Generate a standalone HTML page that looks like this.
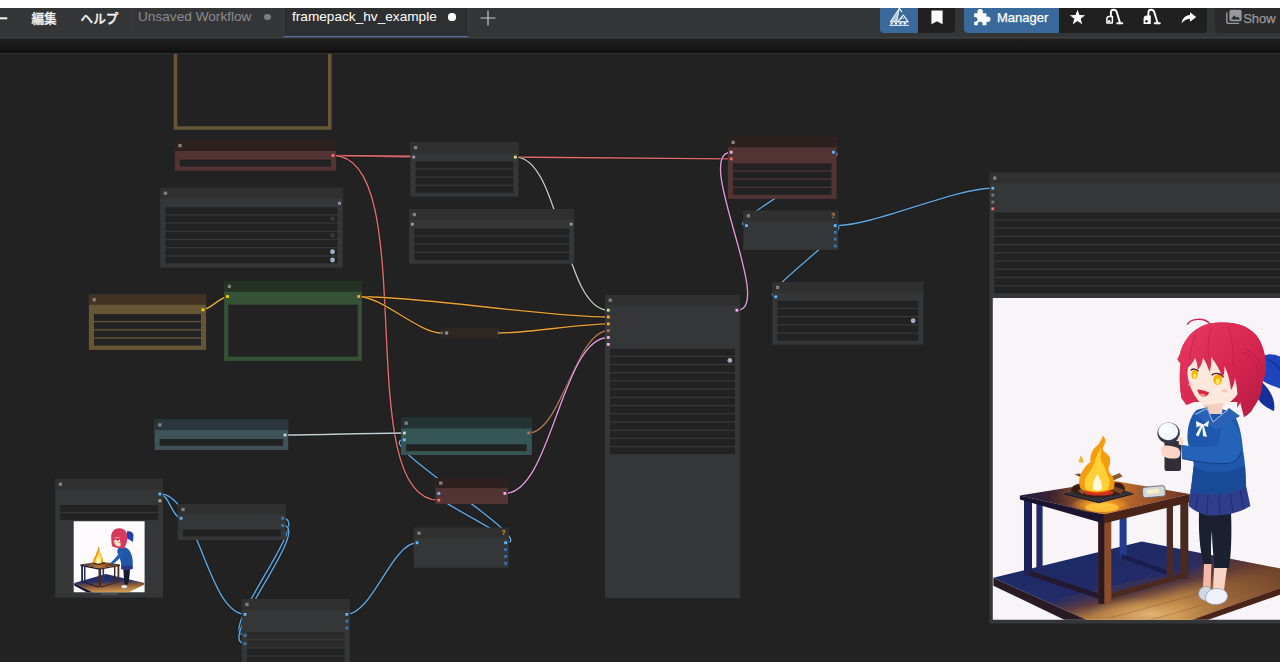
<!DOCTYPE html>
<html lang="ja"><head><meta charset="utf-8"><title>ComfyUI - framepack_hv_example</title>
<style>
html,body{margin:0;padding:0;background:#fff;}
body{width:1280px;height:670px;overflow:hidden;position:relative;font-family:"Liberation Sans","Noto Sans CJK JP",sans-serif;}
#graph{position:absolute;left:0;top:54px;width:1280px;height:607.6px;background:#222222;overflow:hidden;}
#graph svg{position:absolute;left:0;top:-54px;}
#bar{position:absolute;left:0;top:8px;width:1280px;height:30px;color:#f0f0f0;font-size:13px;}
#band{position:absolute;left:0;top:8px;width:1280px;height:46px;background:linear-gradient(to bottom,#343537 0,#343537 28.5px,#3f4042 29.1px,#3f4042 30.1px,#1f1f1f 30.9px,#191919 38px,#0f0f0f 44.4px,#2f2f2f 45.2px,#2c2c2c 46px);}
#bar .t{position:absolute;top:0;height:30px;line-height:18px;white-space:nowrap;}
.menu{font-weight:500;font-size:12.6px;top:2px !important;-webkit-text-stroke:0.35px #f0f0f0;}
.tab{position:absolute;top:0;height:29px;box-sizing:border-box;border-left:1px solid #3a3b3d;}
.tab.active{background:#2e2f31;border-bottom:1px solid #5474b2;}
.dot{position:absolute;border-radius:50%;}
.grp{position:absolute;top:0;height:24.5px;border-radius:0 0 4px 4px;overflow:hidden;background:#202021;}
.grp .blue{position:absolute;left:0;top:0;height:100%;background:#3a6a9c;}

.sb{-webkit-text-stroke:0.25px currentColor;}

</style></head><body>
<div id="band"></div>
<div id="bar">
 <span class="t menu" style="left:-4.5px">ー</span>
 <span class="t menu" style="left:31.4px">編集</span>
 <span class="t menu" style="left:80.6px">ヘルプ</span>
 <div class="tab" style="left:130px;width:154px"></div>
 <span class="t" style="left:138px;top:0;color:#8b8c91;font-size:13.65px">Unsaved Workflow</span>
 <span class="dot" style="left:264.3px;top:6px;width:6.4px;height:6.4px;background:#7b7c81"></span>
 <div class="tab active" style="left:283px;width:185.5px"></div>
 <span class="t" style="left:292px;top:0;color:#ffffff;font-size:13.65px">framepack_hv_example</span>
 <span class="dot" style="left:448.4px;top:5.4px;width:7.2px;height:7.2px;background:#ffffff"></span>
 <div style="position:absolute;left:468px;top:0;width:1px;height:29px;background:#3a3b3d"></div>
 <svg style="position:absolute;left:480px;top:2px" width="16" height="16" viewBox="0 0 16 16"><path d="M8 0.5V15.5M0.5 8H15.5" stroke="#c8c8c8" stroke-width="1.2" fill="none"/></svg>

 <div class="grp" style="left:879.5px;width:75px"><div class="blue" style="width:38.5px"></div></div>
 <div class="grp" style="left:963.5px;width:243.5px"><div class="blue" style="width:95px"></div></div>
 <div class="grp" style="left:1215px;width:80px;background:#2a2a2b"></div>
 <span class="t sb" style="left:997px;top:0.5px;color:#fff;font-size:13px">Manager</span>
 <span class="t sb" style="left:1243.2px;top:2px;color:#98999c;font-size:13px">Show</span>
 <svg style="position:absolute;left:0;top:0" width="1280" height="30" viewBox="0 8 1280 30">
  <!-- crane / triangle icon -->
  <path d="M899.3,8.2 L890.2,21.9 L896.6,21.9 Z" fill="#fff" fill-opacity="0.6" stroke="#fff" stroke-width="0.9" stroke-linejoin="round"/>
  <g stroke="#fff" fill="none" stroke-width="1.1" stroke-linejoin="round" stroke-linecap="round">
   <path d="M899.3,8.4 L901.7,11.6"/>
   <path d="M897.6,21.9 L903.3,15 L908.2,21.9 Z"/>
   <path d="M900.6,19.2 C901.2,17.6 902.8,17.2 903.6,18.4" stroke-width="0.9"/>
   <path d="M889.6,25.4 L908.6,25.4" stroke-width="0.9"/>
   <path d="M890.6,23.5 L908.2,23.5" stroke-width="1.9" stroke-dasharray="2.1 2.3" stroke-linecap="butt"/>
  </g>
  <!-- bookmark -->
  <path d="M931.4,10.4 H942.6 V24.2 L937,21.3 L931.4,24.2 Z" fill="#fff"/>
  <!-- puzzle -->
  <path fill="#fff" d="M974.2,13.2 h3.6 c-0.9,-1.9 0.2,-4.1 2.4,-4.1 c2.2,0 3.3,2.2 2.4,4.1 h3.8 v3.7 c1.9,-0.9 4.1,0.2 4.1,2.4 c0,2.2 -2.2,3.3 -4.1,2.4 v3.6 h-4 c0.9,-1.9 -0.2,-3.6 -2.2,-3.6 c-2,0 -3.1,1.7 -2.2,3.6 h-3.8 v-3.9 c1.7,0.8 3.3,-0.3 3.3,-2.1 c0,-1.8 -1.6,-2.9 -3.3,-2.1 Z"/>
  <!-- star -->
  <polygon fill="#fff" points="1077.50,9.70 1079.44,15.03 1085.11,15.23 1080.64,18.72 1082.20,24.17 1077.50,21.00 1072.80,24.17 1074.36,18.72 1069.89,15.23 1075.56,15.03"/>
  <!-- vacuum outline -->
  <g stroke="#fff" fill="none" stroke-width="1.9" stroke-linecap="round" stroke-linejoin="round">
   <path d="M1110.9,15.4 V12.6 C1110.9,8.9 1115.8,8.8 1116.8,12.2 L1120,22.8 M1117.2,23.3 H1122.3"/>
   <path d="M1106.9,23 V18.8 C1106.9,17.2 1107.9,16.4 1109.2,16.4 H1112.4 V23 Z" stroke-width="1.5"/>
  </g>
  <circle cx="1109.2" cy="21.3" r="1.25" fill="#fff"/>
  <!-- vacuum solid -->
  <g stroke="#fff" fill="none" stroke-width="1.9" stroke-linecap="round" stroke-linejoin="round">
   <path d="M1148.4,15.4 V12.6 C1148.4,8.9 1153.3,8.8 1154.3,12.2 L1157.5,22.8 M1154.7,23.3 H1159.8"/>
  </g>
  <path d="M1143.6,23.9 V18.6 C1143.6,16.6 1144.9,15.6 1146.6,15.6 H1150.8 V23.9 Z" fill="#fff"/>
  <circle cx="1146.4" cy="21.3" r="1.3" fill="#202021"/>
  <!-- share arrow -->
  <path fill="#fff" d="M1190,12.2 L1196.2,17 L1190,21.8 V19 C1186.4,18.8 1183.8,20.4 1181.6,23.4 C1182.2,18.6 1185.2,15.4 1190,15 Z"/>
  <!-- images icon -->
  <g fill="none" stroke="#98999c" stroke-width="1.4" stroke-linejoin="round">
   <path d="M1226.8,12.6 V21.4 C1226.8,22.6 1227.6,23.4 1228.8,23.4 H1239"/>
  </g>
  <rect x="1229.4" y="9.8" width="12.2" height="11.4" rx="1.6" fill="#98999c"/>
  <path d="M1231,19.4 L1234.2,15.2 L1236.4,17.8 L1237.8,16.4 L1240.2,19.4 Z" fill="#2a2a2b"/>
 </svg>

</div>


<div id="graph">
<svg width="1280" height="670" viewBox="0 0 1280 670">
<path d="M332.9,155.5 C353.1,155.5 393.4,157.1 413.6,157.1" stroke="#141414" stroke-opacity="0.55" stroke-width="2.9" fill="none"/>
<path d="M332.9,155.5 C353.1,155.5 393.4,157.1 413.6,157.1" stroke="#e06c6c" stroke-width="1.4" fill="none"/>
<path d="M332.9,155.5 C432.5,155.5 631.7,158.9 731.3,158.9" stroke="#141414" stroke-opacity="0.55" stroke-width="2.9" fill="none"/>
<path d="M332.9,155.5 C432.5,155.5 631.7,158.9 731.3,158.9" stroke="#e06c6c" stroke-width="1.4" fill="none"/>
<path d="M332.9,155.5 C423.1,155.5 348.8,500.2 439.0,500.2" stroke="#141414" stroke-opacity="0.55" stroke-width="2.9" fill="none"/>
<path d="M332.9,155.5 C423.1,155.5 348.8,500.2 439.0,500.2" stroke="#e06c6c" stroke-width="1.4" fill="none"/>
<path d="M515.6,157.1 C560.3,157.1 563.6,310.2 608.3,310.2" stroke="#141414" stroke-opacity="0.55" stroke-width="2.9" fill="none"/>
<path d="M515.6,157.1 C560.3,157.1 563.6,310.2 608.3,310.2" stroke="#c0c8c0" stroke-width="1.4" fill="none"/>
<path d="M736.8,310.2 C776.3,310.2 691.8,152.2 731.3,152.2" stroke="#141414" stroke-opacity="0.55" stroke-width="2.9" fill="none"/>
<path d="M736.8,310.2 C776.3,310.2 691.8,152.2 731.3,152.2" stroke="#de96da" stroke-width="1.4" fill="none"/>
<path d="M833.3,152.2 C861.7,152.2 718.1,225.6 746.5,225.6" stroke="#141414" stroke-opacity="0.55" stroke-width="2.9" fill="none"/>
<path d="M833.3,152.2 C861.7,152.2 718.1,225.6 746.5,225.6" stroke="#5fa6e0" stroke-width="1.4" fill="none"/>
<path d="M835.4,225.6 C875.9,225.6 952.5,188.3 993.0,188.3" stroke="#141414" stroke-opacity="0.55" stroke-width="2.9" fill="none"/>
<path d="M835.4,225.6 C875.9,225.6 952.5,188.3 993.0,188.3" stroke="#5fa6e0" stroke-width="1.4" fill="none"/>
<path d="M835.4,225.6 C858.6,225.6 752.5,296.8 775.7,296.8" stroke="#141414" stroke-opacity="0.55" stroke-width="2.9" fill="none"/>
<path d="M835.4,225.6 C858.6,225.6 752.5,296.8 775.7,296.8" stroke="#5fa6e0" stroke-width="1.4" fill="none"/>
<path d="M202.8,309.8 C209.9,309.8 220.8,296.5 227.9,296.5" stroke="#141414" stroke-opacity="0.55" stroke-width="2.9" fill="none"/>
<path d="M202.8,309.8 C209.9,309.8 220.8,296.5 227.9,296.5" stroke="#e4ae30" stroke-width="1.4" fill="none"/>
<path d="M358.7,296.5 C421.3,296.5 545.7,317.0 608.3,317.0" stroke="#141414" stroke-opacity="0.55" stroke-width="2.9" fill="none"/>
<path d="M358.7,296.5 C421.3,296.5 545.7,317.0 608.3,317.0" stroke="#eba033" stroke-width="1.4" fill="none"/>
<path d="M358.7,296.5 C381.3,296.5 418.9,333.0 441.5,333.0" stroke="#141414" stroke-opacity="0.55" stroke-width="2.9" fill="none"/>
<path d="M358.7,296.5 C381.3,296.5 418.9,333.0 441.5,333.0" stroke="#eba033" stroke-width="1.4" fill="none"/>
<path d="M498.8,333.0 C526.3,333.0 580.8,323.9 608.3,323.9" stroke="#141414" stroke-opacity="0.55" stroke-width="2.9" fill="none"/>
<path d="M498.8,333.0 C526.3,333.0 580.8,323.9 608.3,323.9" stroke="#eba033" stroke-width="1.4" fill="none"/>
<path d="M285.0,435.0 C314.8,435.0 374.4,433.0 404.2,433.0" stroke="#141414" stroke-opacity="0.55" stroke-width="2.9" fill="none"/>
<path d="M285.0,435.0 C314.8,435.0 374.4,433.0 404.2,433.0" stroke="#c4d0d6" stroke-width="1.4" fill="none"/>
<path d="M528.5,433.0 C560.9,433.0 575.9,330.7 608.3,330.7" stroke="#141414" stroke-opacity="0.55" stroke-width="2.9" fill="none"/>
<path d="M528.5,433.0 C560.9,433.0 575.9,330.7 608.3,330.7" stroke="#a87250" stroke-width="1.4" fill="none"/>
<path d="M504.7,493.4 C551.5,493.4 561.5,337.5 608.3,337.5" stroke="#141414" stroke-opacity="0.55" stroke-width="2.9" fill="none"/>
<path d="M504.7,493.4 C551.5,493.4 561.5,337.5 608.3,337.5" stroke="#de96da" stroke-width="1.4" fill="none"/>
<path d="M505.8,542.8 C541.9,542.8 368.0,439.8 404.2,439.8" stroke="#141414" stroke-opacity="0.55" stroke-width="2.9" fill="none"/>
<path d="M505.8,542.8 C541.9,542.8 368.0,439.8 404.2,439.8" stroke="#5fa6e0" stroke-width="1.4" fill="none"/>
<path d="M505.8,542.8 C526.5,542.8 418.2,493.4 439.0,493.4" stroke="#141414" stroke-opacity="0.55" stroke-width="2.9" fill="none"/>
<path d="M505.8,542.8 C526.5,542.8 418.2,493.4 439.0,493.4" stroke="#5fa6e0" stroke-width="1.4" fill="none"/>
<path d="M160.2,493.9 C168.2,493.9 173.0,518.2 181.0,518.2" stroke="#141414" stroke-opacity="0.55" stroke-width="2.9" fill="none"/>
<path d="M160.2,493.9 C168.2,493.9 173.0,518.2 181.0,518.2" stroke="#5fa6e0" stroke-width="1.4" fill="none"/>
<path d="M160.2,493.9 C197.0,493.9 208.2,614.2 245.0,614.2" stroke="#141414" stroke-opacity="0.55" stroke-width="2.9" fill="none"/>
<path d="M160.2,493.9 C197.0,493.9 208.2,614.2 245.0,614.2" stroke="#5fa6e0" stroke-width="1.4" fill="none"/>
<path d="M282.8,518.2 C313.5,518.2 214.3,635.2 245.0,635.2" stroke="#141414" stroke-opacity="0.55" stroke-width="2.9" fill="none"/>
<path d="M282.8,518.2 C313.5,518.2 214.3,635.2 245.0,635.2" stroke="#5fa6e0" stroke-width="1.4" fill="none"/>
<path d="M282.8,525.5 C313.7,525.5 214.0,643.5 245.0,643.5" stroke="#141414" stroke-opacity="0.55" stroke-width="2.9" fill="none"/>
<path d="M282.8,525.5 C313.7,525.5 214.0,643.5 245.0,643.5" stroke="#5fa6e0" stroke-width="1.4" fill="none"/>
<path d="M346.8,614.2 C371.9,614.2 392.1,542.8 417.2,542.8" stroke="#141414" stroke-opacity="0.55" stroke-width="2.9" fill="none"/>
<path d="M346.8,614.2 C371.9,614.2 392.1,542.8 417.2,542.8" stroke="#5fa6e0" stroke-width="1.4" fill="none"/>
<rect x="173.70" y="40.00" width="157.90" height="89.80" fill="#665636"/>
<rect x="177.30" y="40.00" width="150.70" height="86.20" fill="#222222"/>
<g>
<rect x="174.70" y="140.20" width="161.40" height="30.50" fill="#523434"/>
<rect x="174.70" y="140.20" width="161.40" height="10.80" fill="#2f2020"/>
<rect x="178.30" y="144.00" width="3.30" height="3.30" fill="#808080"/>
<rect x="179.80" y="159.70" width="151.20" height="6.84" fill="#222222"/>
<rect x="331.60" y="154.10" width="2.80" height="2.80" fill="#ff6e6e"/>
</g>
<g>
<rect x="160.20" y="187.80" width="182.40" height="79.90" fill="#353637"/>
<rect x="160.20" y="187.80" width="182.40" height="10.80" fill="#303030"/>
<rect x="163.80" y="191.60" width="3.30" height="3.30" fill="#808080"/>
<rect x="165.30" y="207.30" width="172.20" height="6.84" fill="#222222"/>
<rect x="165.30" y="215.51" width="172.20" height="6.84" fill="#222222"/>
<rect x="165.30" y="223.72" width="172.20" height="6.84" fill="#222222"/>
<rect x="165.30" y="231.93" width="172.20" height="6.84" fill="#222222"/>
<rect x="165.30" y="240.14" width="172.20" height="6.84" fill="#222222"/>
<rect x="165.30" y="248.35" width="172.20" height="6.84" fill="#222222"/>
<rect x="165.30" y="256.56" width="172.20" height="6.84" fill="#222222"/>
<circle cx="332.50" cy="218.93" r="2.4" fill="#3a3a3a"/>
<circle cx="332.50" cy="235.35" r="2.4" fill="#3a3a3a"/>
<circle cx="332.50" cy="251.77" r="2.4" fill="#9fb0c4"/>
<circle cx="332.50" cy="259.98" r="2.4" fill="#9fb0c4"/>
<rect x="338.10" y="201.90" width="2.80" height="2.80" fill="#9a9ab0"/>
</g>
<g>
<rect x="410.40" y="142.10" width="108.00" height="54.60" fill="#353637"/>
<rect x="410.40" y="142.10" width="108.00" height="10.90" fill="#303030"/>
<rect x="414.00" y="145.95" width="3.30" height="3.30" fill="#808080"/>
<rect x="415.50" y="161.40" width="97.80" height="6.84" fill="#222222"/>
<rect x="415.50" y="169.61" width="97.80" height="6.84" fill="#222222"/>
<rect x="415.50" y="177.82" width="97.80" height="6.84" fill="#222222"/>
<rect x="415.50" y="186.03" width="97.80" height="6.84" fill="#222222"/>
<rect x="412.30" y="155.70" width="2.80" height="2.80" fill="#9a9ab0"/>
<rect x="513.90" y="155.70" width="2.80" height="2.80" fill="#e0e080"/>
</g>
<g>
<rect x="409.10" y="209.20" width="165.10" height="54.60" fill="#353637"/>
<rect x="409.10" y="209.20" width="165.10" height="10.60" fill="#303030"/>
<rect x="412.70" y="212.90" width="3.30" height="3.30" fill="#808080"/>
<rect x="414.20" y="228.50" width="154.90" height="6.84" fill="#222222"/>
<rect x="414.20" y="236.71" width="154.90" height="6.84" fill="#222222"/>
<rect x="414.20" y="244.92" width="154.90" height="6.84" fill="#222222"/>
<rect x="414.20" y="253.13" width="154.90" height="6.84" fill="#222222"/>
<rect x="411.00" y="222.80" width="2.80" height="2.80" fill="#9a9ab0"/>
<rect x="569.70" y="222.80" width="2.80" height="2.80" fill="#9a9ab0"/>
</g>
<g>
<rect x="727.90" y="137.20" width="108.70" height="61.60" fill="#523434"/>
<rect x="727.90" y="137.20" width="108.70" height="10.20" fill="#2f2020"/>
<rect x="731.50" y="140.70" width="3.30" height="3.30" fill="#808080"/>
<rect x="733.00" y="163.40" width="98.50" height="6.84" fill="#222222"/>
<rect x="733.00" y="171.61" width="98.50" height="6.84" fill="#222222"/>
<rect x="733.00" y="179.82" width="98.50" height="6.84" fill="#222222"/>
<rect x="733.00" y="188.03" width="98.50" height="6.84" fill="#222222"/>
<rect x="729.80" y="150.80" width="2.80" height="2.80" fill="#f6b0f2"/>
<rect x="729.80" y="157.50" width="2.80" height="2.80" fill="#ff6e6e"/>
<rect x="832.10" y="150.80" width="2.80" height="2.80" fill="#64b5f6"/>
</g>
<g>
<rect x="743.20" y="210.70" width="95.10" height="39.20" fill="#353637"/>
<rect x="743.20" y="210.70" width="95.10" height="10.10" fill="#303030"/>
<rect x="746.80" y="214.15" width="3.30" height="3.30" fill="#808080"/>
<text x="833.10" y="218.05" font-size="6.5" font-weight="bold" fill="#e8a030" text-anchor="middle" font-family="Liberation Sans, sans-serif">?</text>
<rect x="745.10" y="224.20" width="2.80" height="2.80" fill="#64b5f6"/>
<rect x="833.80" y="224.20" width="2.80" height="2.80" fill="#64b5f6"/>
<rect x="833.80" y="231.00" width="2.80" height="2.80" fill="#3a78b8"/>
<rect x="833.80" y="237.80" width="2.80" height="2.80" fill="#3a78b8"/>
<rect x="833.80" y="244.60" width="2.80" height="2.80" fill="#3a78b8"/>
</g>
<g>
<rect x="772.40" y="282.00" width="150.90" height="62.70" fill="#353637"/>
<rect x="772.40" y="282.00" width="150.90" height="10.70" fill="#303030"/>
<rect x="776.00" y="285.75" width="3.30" height="3.30" fill="#808080"/>
<rect x="777.50" y="300.90" width="140.70" height="6.84" fill="#222222"/>
<rect x="777.50" y="309.11" width="140.70" height="6.84" fill="#222222"/>
<rect x="777.50" y="317.32" width="140.70" height="6.84" fill="#222222"/>
<rect x="777.50" y="325.53" width="140.70" height="6.84" fill="#222222"/>
<rect x="777.50" y="333.74" width="140.70" height="6.84" fill="#222222"/>
<circle cx="913.20" cy="320.74" r="2.4" fill="#9fb0c4"/>
<rect x="774.30" y="295.40" width="2.80" height="2.80" fill="#64b5f6"/>
</g>
<g>
<rect x="605.00" y="294.90" width="135.00" height="303.10" fill="#353637"/>
<rect x="605.00" y="294.90" width="135.00" height="10.60" fill="#303030"/>
<rect x="608.60" y="298.60" width="3.30" height="3.30" fill="#808080"/>
<rect x="610.10" y="348.80" width="124.80" height="6.84" fill="#222222"/>
<rect x="610.10" y="357.01" width="124.80" height="6.84" fill="#222222"/>
<rect x="610.10" y="365.22" width="124.80" height="6.84" fill="#222222"/>
<rect x="610.10" y="373.43" width="124.80" height="6.84" fill="#222222"/>
<rect x="610.10" y="381.64" width="124.80" height="6.84" fill="#222222"/>
<rect x="610.10" y="389.85" width="124.80" height="6.84" fill="#222222"/>
<rect x="610.10" y="398.06" width="124.80" height="6.84" fill="#222222"/>
<rect x="610.10" y="406.27" width="124.80" height="6.84" fill="#222222"/>
<rect x="610.10" y="414.48" width="124.80" height="6.84" fill="#222222"/>
<rect x="610.10" y="422.69" width="124.80" height="6.84" fill="#222222"/>
<rect x="610.10" y="430.90" width="124.80" height="6.84" fill="#222222"/>
<rect x="610.10" y="439.11" width="124.80" height="6.84" fill="#222222"/>
<rect x="610.10" y="447.32" width="124.80" height="6.84" fill="#222222"/>
<circle cx="729.90" cy="360.43" r="2.4" fill="#9fb0c4"/>
<rect x="606.90" y="308.80" width="2.80" height="2.80" fill="#d0e0a0"/>
<rect x="606.90" y="315.60" width="2.80" height="2.80" fill="#ffa931"/>
<rect x="606.90" y="322.50" width="2.80" height="2.80" fill="#ffa931"/>
<rect x="606.90" y="329.30" width="2.80" height="2.80" fill="#ad7452"/>
<rect x="606.90" y="336.10" width="2.80" height="2.80" fill="#f6b0f2"/>
<rect x="606.90" y="343.00" width="2.80" height="2.80" fill="#f6b0f2"/>
<rect x="735.50" y="308.80" width="2.80" height="2.80" fill="#f6b0f2"/>
</g>
<g>
<rect x="88.90" y="294.60" width="117.20" height="55.30" fill="#665636"/>
<rect x="88.90" y="294.60" width="117.20" height="10.10" fill="#423222"/>
<rect x="92.50" y="298.05" width="3.30" height="3.30" fill="#808080"/>
<rect x="94.00" y="314.10" width="107.00" height="6.84" fill="#222222"/>
<rect x="94.00" y="322.31" width="107.00" height="6.84" fill="#222222"/>
<rect x="94.00" y="330.52" width="107.00" height="6.84" fill="#222222"/>
<rect x="94.00" y="338.73" width="107.00" height="6.84" fill="#222222"/>
<rect x="201.60" y="308.40" width="2.80" height="2.80" fill="#ffd500"/>
</g>
<g>
<rect x="224.10" y="281.00" width="137.80" height="79.90" fill="#365236"/>
<rect x="224.10" y="281.00" width="137.80" height="10.80" fill="#243224"/>
<rect x="227.70" y="284.80" width="3.30" height="3.30" fill="#808080"/>
<rect x="228.30" y="304.70" width="129.40" height="52.00" fill="#222222"/>
<rect x="226.00" y="295.10" width="2.80" height="2.80" fill="#ffd500"/>
<rect x="357.40" y="295.10" width="2.80" height="2.80" fill="#ffa931"/>
</g>
<rect x="440.60" y="327.50" width="58.40" height="11.10" fill="#2e2623"/>
<rect x="445.00" y="331.40" width="3.20" height="3.20" fill="#8a8a8a"/>
<rect x="440.30" y="331.60" width="2.60" height="2.60" fill="#667066"/>
<rect x="497.60" y="331.60" width="2.60" height="2.60" fill="#667066"/>
<g>
<rect x="154.60" y="419.70" width="133.60" height="30.30" fill="#3f5159"/>
<rect x="154.60" y="419.70" width="133.60" height="10.30" fill="#2a363b"/>
<rect x="158.20" y="423.25" width="3.30" height="3.30" fill="#808080"/>
<rect x="159.70" y="439.00" width="123.40" height="6.84" fill="#222222"/>
<rect x="283.70" y="433.60" width="2.80" height="2.80" fill="#c8d8e0"/>
</g>
<g>
<rect x="401.00" y="417.80" width="130.80" height="37.20" fill="#365555"/>
<rect x="401.00" y="417.80" width="130.80" height="10.60" fill="#233333"/>
<rect x="404.60" y="421.50" width="3.30" height="3.30" fill="#808080"/>
<rect x="406.10" y="444.30" width="120.60" height="6.84" fill="#222222"/>
<rect x="402.90" y="431.60" width="2.80" height="2.80" fill="#c8d8e0"/>
<circle cx="404.30" cy="439.80" r="1.7" fill="#64b5f6"/>
<rect x="527.30" y="431.60" width="2.80" height="2.80" fill="#ad7452"/>
</g>
<g>
<rect x="435.50" y="478.10" width="72.50" height="25.90" fill="#523434"/>
<rect x="435.50" y="478.10" width="72.50" height="10.00" fill="#2f2020"/>
<rect x="439.10" y="481.50" width="3.30" height="3.30" fill="#808080"/>
<circle cx="438.80" cy="493.40" r="1.7" fill="#64b5f6"/>
<rect x="437.40" y="498.80" width="2.80" height="2.80" fill="#ff6e6e"/>
<rect x="503.50" y="492.00" width="2.80" height="2.80" fill="#f6b0f2"/>
</g>
<g>
<rect x="413.75" y="527.75" width="95.00" height="40.00" fill="#353637"/>
<rect x="413.75" y="527.75" width="95.00" height="10.75" fill="#303030"/>
<rect x="417.35" y="531.52" width="3.30" height="3.30" fill="#808080"/>
<text x="503.55" y="535.42" font-size="6.5" font-weight="bold" fill="#e8a030" text-anchor="middle" font-family="Liberation Sans, sans-serif">?</text>
<rect x="415.65" y="541.35" width="2.80" height="2.80" fill="#64b5f6"/>
<rect x="504.25" y="541.35" width="2.80" height="2.80" fill="#64b5f6"/>
<rect x="504.25" y="548.20" width="2.80" height="2.80" fill="#3a78b8"/>
<rect x="504.25" y="555.00" width="2.80" height="2.80" fill="#3a78b8"/>
<rect x="504.25" y="561.90" width="2.80" height="2.80" fill="#3a78b8"/>
</g>
<g>
<rect x="55.20" y="478.80" width="107.80" height="118.80" fill="#353637"/>
<rect x="55.20" y="478.80" width="107.80" height="10.80" fill="#303030"/>
<rect x="58.80" y="482.60" width="3.30" height="3.30" fill="#808080"/>
<rect x="60.30" y="505.00" width="97.90" height="6.84" fill="#222222"/>
<rect x="60.30" y="513.21" width="97.90" height="6.84" fill="#222222"/>
<rect x="158.50" y="492.60" width="2.80" height="2.80" fill="#64b5f6"/>
<rect x="158.50" y="499.40" width="2.80" height="2.80" fill="#b4b478"/>
</g>
<g>
<rect x="177.75" y="504.20" width="108.00" height="35.80" fill="#353637"/>
<rect x="177.75" y="504.20" width="108.00" height="10.30" fill="#303030"/>
<rect x="181.35" y="507.75" width="3.30" height="3.30" fill="#808080"/>
<rect x="182.85" y="529.50" width="97.80" height="6.84" fill="#222222"/>
<rect x="179.65" y="516.85" width="2.80" height="2.80" fill="#64b5f6"/>
<rect x="281.25" y="516.85" width="2.80" height="2.80" fill="#3a78b8"/>
<rect x="281.25" y="524.10" width="2.80" height="2.80" fill="#3a78b8"/>
</g>
<g>
<rect x="241.70" y="598.90" width="108.20" height="71.10" fill="#353637"/>
<rect x="241.70" y="598.90" width="108.20" height="10.90" fill="#303030"/>
<rect x="245.30" y="602.75" width="3.30" height="3.30" fill="#808080"/>
<rect x="247.10" y="632.10" width="97.50" height="6.84" fill="#2b2b2c"/>
<rect x="247.10" y="640.31" width="97.50" height="6.84" fill="#2b2b2c"/>
<rect x="247.10" y="648.52" width="97.50" height="6.84" fill="#222222"/>
<rect x="247.10" y="656.73" width="97.50" height="6.84" fill="#222222"/>
<rect x="243.60" y="613.00" width="2.80" height="2.80" fill="#64b5f6"/>
<rect x="243.60" y="634.10" width="2.80" height="2.80" fill="#3a78b8"/>
<rect x="243.60" y="642.40" width="2.80" height="2.80" fill="#3a78b8"/>
<rect x="345.40" y="613.00" width="2.80" height="2.80" fill="#64b5f6"/>
<rect x="345.40" y="619.80" width="2.80" height="2.80" fill="#3a78b8"/>
<rect x="345.40" y="626.60" width="2.80" height="2.80" fill="#3a78b8"/>
</g>
<g>
<rect x="989.50" y="172.50" width="310.50" height="451.00" fill="#353637"/>
<rect x="989.50" y="172.50" width="310.50" height="11.00" fill="#303030"/>
<rect x="993.10" y="176.40" width="3.30" height="3.30" fill="#808080"/>
<rect x="994.25" y="212.50" width="305.75" height="6.84" fill="#222222"/>
<rect x="994.25" y="220.71" width="305.75" height="6.84" fill="#222222"/>
<rect x="994.25" y="228.92" width="305.75" height="6.84" fill="#222222"/>
<rect x="994.25" y="237.13" width="305.75" height="6.84" fill="#222222"/>
<rect x="994.25" y="245.34" width="305.75" height="6.84" fill="#222222"/>
<rect x="994.25" y="253.55" width="305.75" height="6.84" fill="#222222"/>
<rect x="994.25" y="261.76" width="305.75" height="6.84" fill="#222222"/>
<rect x="994.25" y="269.97" width="305.75" height="6.84" fill="#222222"/>
<rect x="994.25" y="278.18" width="305.75" height="6.84" fill="#222222"/>
<rect x="994.25" y="286.39" width="305.75" height="6.84" fill="#222222"/>
<rect x="991.40" y="186.90" width="2.80" height="2.80" fill="#64b5f6"/>
<rect x="991.40" y="193.70" width="2.80" height="2.80" fill="#777788"/>
<rect x="991.40" y="200.60" width="2.80" height="2.80" fill="#777788"/>
<rect x="991.40" y="207.40" width="2.80" height="2.80" fill="#ff6e6e"/>
</g>
<defs>
 <clipPath id="imgclip"><rect x="992.8" y="298" width="300" height="321.8"/></clipPath>
 <linearGradient id="floorg" gradientUnits="userSpaceOnUse" x1="1122" y1="548" x2="1140" y2="622">
  <stop offset="0" stop-color="#1c2a66"/><stop offset="0.45" stop-color="#232c68"/><stop offset="0.62" stop-color="#5a3c40"/><stop offset="0.78" stop-color="#b07a42"/><stop offset="1" stop-color="#cf9852"/>
 </linearGradient>
 <linearGradient id="topg" x1="0" y1="0" x2="1" y2="0">
  <stop offset="0" stop-color="#1c1c40"/><stop offset="0.18" stop-color="#3a2230"/><stop offset="0.4" stop-color="#a05a2a"/><stop offset="0.52" stop-color="#d88424"/><stop offset="0.66" stop-color="#b0622a"/><stop offset="0.85" stop-color="#8a4828"/><stop offset="1" stop-color="#6a3424"/>
 </linearGradient>
 <radialGradient id="glow" cx="0.5" cy="0.5" r="0.5">
  <stop offset="0" stop-color="#ffd060" stop-opacity="0.95"/><stop offset="0.6" stop-color="#f39a20" stop-opacity="0.7"/><stop offset="1" stop-color="#f39a20" stop-opacity="0"/>
 </radialGradient>
 <linearGradient id="hairg" x1="0" y1="0" x2="1" y2="1">
  <stop offset="0" stop-color="#e83a62"/><stop offset="0.6" stop-color="#d4244e"/><stop offset="1" stop-color="#b01a40"/>
 </linearGradient>
 <linearGradient id="legbrown" x1="0" y1="0" x2="0" y2="1">
  <stop offset="0" stop-color="#3a2018"/><stop offset="1" stop-color="#5a3422"/>
 </linearGradient>
 <radialGradient id="woodhl" cx="0.5" cy="0.5" r="0.5">
  <stop offset="0" stop-color="#e6b878" stop-opacity="0.9"/><stop offset="0.6" stop-color="#d09a58" stop-opacity="0.5"/><stop offset="1" stop-color="#c08a4a" stop-opacity="0"/>
 </radialGradient>
 <clipPath id="floorclip"><polygon points="993.4,577.8 1141.8,541.5 1290,570.5 1290,584.5 1191.6,620 1087,620"/></clipPath>
 <linearGradient id="floorR" x1="0" y1="0" x2="1" y2="0">
  <stop offset="0" stop-color="#5a3020" stop-opacity="0"/><stop offset="0.5" stop-color="#6a3a26" stop-opacity="0.55"/><stop offset="1" stop-color="#5a3020" stop-opacity="0.8"/>
 </linearGradient>
</defs>
<g clip-path="url(#imgclip)">
 <rect x="992" y="297" width="300" height="324" fill="#f8f4f8"/>
 <!-- floor -->
 <polygon points="993.4,577.8 1141.8,541.5 1290,570.5 1290,584.5 1191.6,620 1087,620" fill="url(#floorg)"/>
 <g clip-path="url(#floorclip)">
  <ellipse cx="1150" cy="614" rx="62" ry="17" fill="url(#woodhl)"/>
  <rect x="1180" y="540" width="110" height="85" fill="url(#floorR)"/>
  <g stroke="#7a4a28" stroke-width="0.6" opacity="0.55">
   <path d="M1060,600 L1150,578 M1080,610 L1180,584 M1110,618 L1220,588 M1150,620 L1250,592"/>
  </g>
 </g>
 <polygon points="993.4,577.8 1087,620 1064.8,620 993.4,585.7" fill="#2a1a24"/>
 <polygon points="1290,584.4 1191.6,620 1207.5,620 1290,591.2" fill="#4a2418"/>
 <!-- table back legs -->
 <rect x="1119.6" y="516" width="7" height="42.5" fill="#233a90"/>
 <polygon points="1121.4,554 1169,571 1169,575.5 1121.4,558.5" fill="#1a1e4c"/>
 <rect x="1166.7" y="503" width="6.3" height="72.5" fill="#4a2a22"/>
 <!-- left legs -->
 <rect x="1024" y="499" width="8" height="77" fill="#1c2258"/>
 <rect x="1036.4" y="503" width="6.2" height="71" fill="#232a66"/>
 <!-- stretchers -->
 <polygon points="1030,570.5 1099,593.5 1099,599 1030,576" fill="#241a30"/>
 <polygon points="1110,593.5 1184,572.5 1184,578 1110,599" fill="#4a2a1e"/>
 <!-- right leg -->
 <rect x="1180.3" y="500" width="8" height="79" fill="#4a2a20"/>
 <!-- front leg -->
 <rect x="1098.3" y="514" width="13" height="89.8" fill="#8a4c2a"/>
 <rect x="1098.3" y="514" width="6" height="89.8" fill="#2a1822"/>
 <!-- table top -->
 <polygon points="1019.9,495.6 1112,480.5 1189.8,494 1103.6,514.5" fill="url(#topg)"/>
 <polygon points="1019.9,495.6 1103.6,514.5 1103.6,523.5 1019.9,499.4" fill="#1a1430"/>
 <polygon points="1103.6,514.5 1189.8,494 1189.8,502.2 1103.6,523.5" fill="#4a2418"/>
 <ellipse cx="1100" cy="505" rx="30" ry="8.5" fill="url(#glow)"/>
 <ellipse cx="1102" cy="507.5" rx="17" ry="4.6" fill="#ffc638" opacity="0.85"/>
 <!-- fire pit -->
 <polygon points="1064.2,493.2 1108.5,485.6 1133.2,493.2 1098.7,501.6" fill="#30303e"/>
 <polygon points="1064.2,493.2 1098.7,501.6 1133.2,493.2 1133.2,494.6 1098.7,503.2 1064.2,494.6" fill="#1c1c2a"/>
 <path d="M1071,491 C1071,485 1078,483 1084,484 L1118,482.5 C1124,483 1126,488 1124.6,492 C1116,496 1106,497.6 1098,497.6 C1088,497.6 1078,495.6 1071,491 Z" fill="#3a1e16"/>
 <polygon points="1074.6,474.6 1079,473.6 1124,490 1121,494" fill="#7a4628"/>
 <polygon points="1119.6,473 1122.6,476.6 1082,494 1078,490.6" fill="#8e5830"/>
 <ellipse cx="1099" cy="492.6" rx="15" ry="3" fill="#d0301c"/>
 <!-- flame -->
 <path d="M1078.6,462 C1079.4,459 1080,457.6 1080.6,455.6 C1082.6,457.6 1083.6,460 1083,463 Z" fill="#f6a21c" opacity="0.85"/>
 <path d="M1081,489 C1078,484 1078.6,476 1083,470.2 C1085,466 1088,464 1090.5,462 C1090,458 1090.6,455 1092,452 C1093.6,448 1096.6,446.6 1098.7,443.9 C1100.6,441 1102,438.6 1102.8,435.7 C1105,437.6 1106,440 1105.3,442.2 C1104.6,445 1102.6,447 1102.8,449.6 C1104,452.6 1107,453 1108.5,455.4 C1110,457.4 1110.6,459.6 1110.2,462 C1110,465 1108,467.4 1108.5,470.2 C1109.6,474 1113,475.6 1113.5,479.2 C1115,483 1114.6,486 1113.5,489 C1104,493.6 1090,493.6 1081,489 Z" fill="#f59c10"/>
 <path d="M1086,489.4 C1083,484 1085,477 1089.6,472 C1092.6,468 1094,464 1095.6,459 C1097,455 1099,451 1101.4,447 C1101,452 1100,456 1101,460 C1102,464 1105,466 1105.6,470 C1106,474 1108.6,476 1109.4,480 C1110,484 1109,487 1107.6,489.6 C1101,492 1092,492 1086,489.4 Z" fill="#ffd136"/>
 <path d="M1093.6,489.6 C1091.6,484 1094,479 1097.4,474.3 C1099.6,479 1103,484 1101.8,489.6 C1099,490.8 1096,490.8 1093.6,489.6 Z" fill="#fff8e0"/>
 <!-- bottle -->
 <rect x="1142.6" y="486.4" width="22.6" height="10.6" rx="2.6" transform="rotate(-5 1154 492)" fill="#d4d6d8" stroke="#6a6a74" stroke-width="0.9"/>
 <rect x="1147" y="489" width="12" height="4.6" rx="1" transform="rotate(-5 1154 492)" fill="#f6eec4"/>
 <!-- girl: bow -->
 <path d="M1262,357 C1268,352 1278,354 1290,362 L1290,392 C1280,388 1270,386 1263,381 Z" fill="#1d44bc"/>
 <path d="M1268,360 C1274,362 1280,368 1284,376" stroke="#122c88" stroke-width="1.2" fill="none"/>
 <path d="M1262,382 C1270,390 1276,400 1274,411 C1266,408 1258,402 1256,394 Z" fill="#15309a"/>
 <!-- hair back -->
 <path d="M1222,322.5 C1200,321 1184,336 1180,354 L1177.4,359.6 L1180.6,363.5 C1179,376 1180,390 1181.5,398 L1186.5,405 L1194,402 L1240,402 L1244,417 C1249,414 1252,411 1253,408 C1259,400 1262,392 1262.5,382 C1266,374 1266.5,366 1265,358 C1264,348 1260,340 1256,335 C1248,326 1236,322 1222,322.5 Z" fill="url(#hairg)"/>
 <!-- legs -->
 <path d="M1199,512 L1231,512 C1232,536 1231,556 1229,568 L1214.5,568 C1213,552 1212,540 1212,530 C1210.5,545 1211,556 1211.5,564.5 L1203.5,564.5 C1199.5,548 1198.5,530 1199,512 Z" fill="#1a2030"/>
 <path d="M1204,564 L1211.5,564 L1210.5,588 L1203,588 Z" fill="#f4b8a8"/>
 <path d="M1214,568 L1227,568 L1224,590 L1213,590 Z" fill="#f8d4c4"/>
 <path d="M1198.5,594 C1199,588 1204,585 1209,587 L1214,592 L1212,601 C1206,602 1199,600 1198.5,594 Z" fill="#cfd6e4" stroke="#8a94b0" stroke-width="0.7"/>
 <path d="M1205.5,598 C1206,591 1212,588 1218,588.5 C1224,589 1228,592 1227.5,597 C1227,602 1220,605 1214,604.5 C1209,604 1205.5,602 1205.5,598 Z" fill="#eef1f8" stroke="#8a94b0" stroke-width="0.7"/>
 <!-- skirt -->
 <path d="M1190.7,489 L1246,485.5 L1250.4,506 C1240,513 1222,516.5 1208,515.4 C1200,514 1193,510 1188.6,505.7 Z" fill="#2e3e8c"/>
 <path d="M1198,494 L1196,509 M1208,495 L1207,514 M1219,495 L1220,515 M1230,493 L1233,512 M1240,490 L1244,509" stroke="#1e2a6a" stroke-width="0.9" fill="none"/>
 <!-- torso -->
 <path d="M1196.6,410 C1190,416 1187,428 1187.5,440 C1189,450 1193,458 1193.7,464 C1193,474 1191.5,483 1190.7,491.2 C1206,496.5 1230,494.5 1246,487.5 C1246,474 1245,462 1243,450 C1242,436 1239,422 1233.4,413.6 C1222,407 1208,406 1196.6,410 Z" fill="#1f57aa"/>
 <path d="M1193.7,466 C1204,474 1228,474 1245,466 L1246,487.5 C1230,494.5 1206,496.5 1190.7,491.2 Z" fill="#194a98"/>
 <!-- arm -->
 <path d="M1228,418 C1238,424 1243.5,440 1241,452 C1239,460 1233,463.5 1226,463.5 C1212,464.5 1196,461.5 1182,458.5 L1181,444.5 C1194,447.5 1208,447.5 1219,444.5 C1219,434 1221,424 1228,418 Z" fill="#2563b8"/>
 <path d="M1182,458.5 C1196,461.5 1212,464.5 1226,463.5 C1233,463.5 1239,460 1241,452" stroke="#153e86" stroke-width="1" fill="none"/>
 <!-- face -->
 <path d="M1187,352 C1185,372 1188,396 1207.8,409 C1226,408 1241,398 1244,378 L1244,350 Z" fill="#fde8dc"/>
 <path d="M1203,405 L1223,403 L1222,414 L1207,414 Z" fill="#f4d0c0"/>
 <ellipse cx="1240.8" cy="390.5" rx="3.2" ry="4.6" fill="#fbdccd"/>
 <!-- collar + ribbon -->
 <path d="M1194,413.5 L1207,407 L1213,421 L1229,408 L1240,416 L1216,430 Z" fill="#2a62b8"/>
 <path d="M1195,414.5 L1207,408.5 L1213,422 L1228,409.5" stroke="#dfe8f6" stroke-width="0.7" fill="none"/>
 <path d="M1196,421 L1203.5,424.5 L1209,420.5 L1208,427 L1203.8,425.6 L1207,437 L1203,436 L1202.4,427 L1198.5,436.5 L1195.8,435 L1200.6,425.8 L1196.5,427.5 Z" fill="#f6f8fc"/>
 <!-- eyes / mouth -->
 <ellipse cx="1194.6" cy="374.6" rx="3.1" ry="4.5" fill="#f4b400"/>
 <ellipse cx="1194.8" cy="376" rx="1.5" ry="2.4" fill="#ffe46a"/>
 <path d="M1190.6,370.4 C1192.4,368.4 1196.4,368.4 1198.4,371.4" stroke="#5a1c2c" stroke-width="1.3" fill="none"/>
 <ellipse cx="1217.6" cy="379.6" rx="4.3" ry="5.2" fill="#f4b000"/>
 <ellipse cx="1217.8" cy="381.2" rx="2.1" ry="2.8" fill="#ffe46a"/>
 <path d="M1211.6,375.2 C1214.6,372.4 1220.6,372.8 1223.4,377.4" stroke="#5a1c2c" stroke-width="1.4" fill="none"/>
 <path d="M1197.2,389.4 C1201,389.6 1206,390.8 1209.2,392.6 C1207.4,398.2 1199.4,398.4 1197.2,389.4 Z" fill="#d8283e"/>
 <path d="M1199,394.4 C1201.4,393.2 1204.4,393.6 1206,395.2 C1203.8,396.8 1200.8,396.6 1199,394.4 Z" fill="#f48a92"/>
 <ellipse cx="1190.6" cy="384.6" rx="2.6" ry="1.5" fill="#f8b8b0" opacity="0.6"/>
 <ellipse cx="1224.6" cy="390.8" rx="3.2" ry="1.7" fill="#f8b8b0" opacity="0.6"/>
 <!-- hair front / bangs -->
 <path d="M1181.5,398 C1179.6,386 1179,374 1180.6,363.5 L1177.4,359.6 L1180,354 C1184,336 1200,321 1222,322.5 C1236,322 1248,326 1256,335 C1260,340 1264,348 1265,358 C1266.5,366 1266,374 1262.5,382 C1262,392 1259,400 1253,408 C1252,411 1249,414 1244,417 C1245,408 1245,400 1244.5,392 C1243,398 1240.5,403 1237,408 C1238,398 1237.6,388 1235,378 C1234.4,383 1233,387 1231,390 C1230,381 1228,373 1224.5,366 C1224.6,371 1224,375 1222.6,378 C1220,370 1216,363 1211,357 C1211.6,363 1211,368 1209.4,372 C1208,367 1206,362 1203,358 C1202.4,363 1200.6,367 1197.6,370 C1197.6,365 1196.6,361 1195,358 C1193.4,362 1191,365 1188,367.4 C1186.6,377 1186.4,388 1188.4,397 C1189,400 1189,403 1186.5,405 Z" fill="url(#hairg)"/>
 <path d="M1243,352 C1250,356 1256,362 1259,372 M1246,349 C1252,352 1258,358 1261,366" stroke="#a81a3c" stroke-width="0.9" fill="none" opacity="0.8"/>
 <path d="M1212,327 C1208,337 1207,347 1209,357 M1228,326 C1232,338 1234,352 1233,366 M1196,334 C1192,344 1190,352 1190,360" stroke="#b41c42" stroke-width="0.9" fill="none" opacity="0.7"/>
 <path d="M1187.2,324.6 C1190,318.6 1204,316.6 1210.4,324.4" stroke="#cc2650" stroke-width="1.4" fill="none"/>
 <!-- flashlight + hands -->
 <rect x="1164.5" y="441" width="16.5" height="30" rx="2.2" fill="#322e38"/>
 <ellipse cx="1168.6" cy="433" rx="11.2" ry="10.6" fill="#343848"/>
 <ellipse cx="1168.2" cy="431.4" rx="10" ry="8.8" fill="#f2f8fc"/>
 <ellipse cx="1166" cy="429.6" rx="5.6" ry="4.4" fill="#ffffff"/>
 <path d="M1161.4,447 C1165,444.6 1172,445.6 1178,448 C1181,451 1181,455.6 1178,458 C1172,459.4 1165,458.4 1162,455 C1160.6,452 1160.4,449 1161.4,447 Z" fill="#fbd6c6"/>
 <path d="M1178.4,436.6 C1182.4,436.6 1184.4,441 1182.4,445.4 L1178.8,444.6 Z" fill="#fbd6c6"/>
</g>

<defs>
 <clipPath id="thclip"><rect x="73.7" y="521.3" width="70.9" height="70.9"/></clipPath>
 <linearGradient id="thfloor" x1="0" y1="0" x2="0.2" y2="1">
  <stop offset="0" stop-color="#1d2a63"/><stop offset="0.45" stop-color="#28306a"/><stop offset="0.7" stop-color="#8a5a38"/><stop offset="1" stop-color="#d09a50"/>
 </linearGradient>
 <linearGradient id="thtop" x1="0" y1="0" x2="1" y2="0">
  <stop offset="0" stop-color="#24204a"/><stop offset="0.45" stop-color="#c07a28"/><stop offset="0.7" stop-color="#7a4426"/><stop offset="1" stop-color="#4a2a20"/>
 </linearGradient>
</defs>
<g clip-path="url(#thclip)">
 <rect x="73" y="521" width="72" height="72" fill="#fdfbfd"/>
 <polygon points="74.2,583.1 105.8,574.1 144.6,583 144.6,584.4 127.3,593 93.9,593" fill="url(#thfloor)"/>
 <polygon points="74.2,583.1 93.9,593 88,593 74.2,585.6" fill="#1a1630"/>
 <!-- table legs -->
 <rect x="81.2" y="566" width="1.8" height="16.5" fill="#1c2258"/>
 <rect x="84" y="567" width="1.5" height="14" fill="#232a66"/>
 <rect x="102.5" y="569" width="1.6" height="11" fill="#22357e"/>
 <rect x="117.5" y="566" width="1.8" height="16" fill="#4a2a22"/>
 <rect x="114" y="567" width="1.4" height="14" fill="#3a2420"/>
 <rect x="98.5" y="568" width="2.6" height="19" fill="#4a2a1e"/>
 <polygon points="82,581 99,586.5 99,587.8 82,582.3" fill="#2a1c2c"/>
 <polygon points="101,586.5 118.5,581 118.5,582.3 101,587.8" fill="#4a2a1e"/>
 <!-- table top -->
 <polygon points="80.4,564.6 100.4,561.6 120,564.6 99.5,568.4" fill="url(#thtop)"/>
 <polygon points="80.4,564.6 99.5,568.4 99.5,569.8 80.4,566" fill="#1a1430"/>
 <polygon points="99.5,568.4 120,564.6 120,566 99.5,569.8" fill="#4a2618"/>
 <!-- fire -->
 <polygon points="91.5,563 98.5,561.2 106,563 98.5,565.2" fill="#2a2228"/>
 <path d="M93.6,562.6 C92.6,559.6 94.4,557.4 95.6,555.6 C96,553 96.8,551.6 97.6,550 C98,548.6 98.4,547.4 98.7,546 C99.8,548 99.4,550 99.8,552 C101,553.6 101.6,555 101.4,556.6 C103,558.4 103.6,560.6 102.8,562.6 C100,564.2 96,564.2 93.6,562.6 Z" fill="#f49a10"/>
 <path d="M95.4,562.8 C94.6,560 96.4,558 97.6,555.4 C98.6,553.4 98.6,552 99,550.6 C99.8,553.6 101,556 101.4,558.6 C101.8,560.2 101.6,561.6 101,562.8 C99,563.8 97,563.8 95.4,562.8 Z" fill="#ffe070"/>
 <ellipse cx="98.2" cy="561" rx="1.6" ry="2.2" fill="#fff8e0"/>
 <!-- girl -->
 <path d="M127,531.5 C130,530.5 133,532 133.5,535 L133,542 C131,540.5 129,539.5 127,538.5 Z" fill="#1c3fb4"/>
 <path d="M123.4,568 L130,567.5 C130,574 129,580 128,584.5 L124.5,584.5 C124,578 123.4,573 123.4,568 Z" fill="#181c2a"/>
 <ellipse cx="124.3" cy="586.6" rx="3" ry="1.7" fill="#e6e8f0"/>
 <path d="M118.6,548 C122,546 126.6,547 129,550 C131.6,553.6 132.8,558 132.8,563 L132.6,566.4 C129,568.6 124.6,568.6 121.2,567 C121.6,562 119.6,557 117.4,553 C117,551 117.6,549 118.6,548 Z" fill="#1f56a8"/>
 <path d="M121.2,566 L132.6,565.6 L133,568.6 C129,570.6 124.6,570.6 121,569 Z" fill="#2a3880"/>
 <path d="M121,549.5 C119,554 115,559 110,563.2 L112,564.4 C117,561.5 121.5,557 124,552.5 Z" fill="#2260b4"/>
<g transform="translate(-1.3,1.8)">
 <path d="M112.5,536 C112,529.5 116.5,526.2 121,526.5 C126.5,527 129.5,531.5 128.6,537.5 C128.2,542 126.5,545 124.5,547 C121.5,546.5 116,546 113.5,544.5 C112.8,542 112.6,539 112.5,536 Z" fill="#d8385a"/>
 <path d="M114.5,538 C115,535.5 118,534.5 121,535.5 L122,544 C119,545.6 115.5,544 114.5,538 Z" fill="#fde6da"/>
 <circle cx="116.4" cy="540.4" r="0.8" fill="#e0a000"/><circle cx="120.4" cy="540.8" r="0.8" fill="#e0a000"/>
 <path d="M113.6,537.6 C116,535.4 120,535 123.4,536.6 L122.6,539.2 L120.6,537.4 L119,539.4 L117,537.4 L115,539.4 Z" fill="#d8385a"/>
</g>
</g>
<text x="109.2" y="595.1" font-size="3" fill="#8a8a8a" text-anchor="middle" font-family="Liberation Sans, sans-serif">1024 x 1024</text>

</svg>
</div>
</body></html>
